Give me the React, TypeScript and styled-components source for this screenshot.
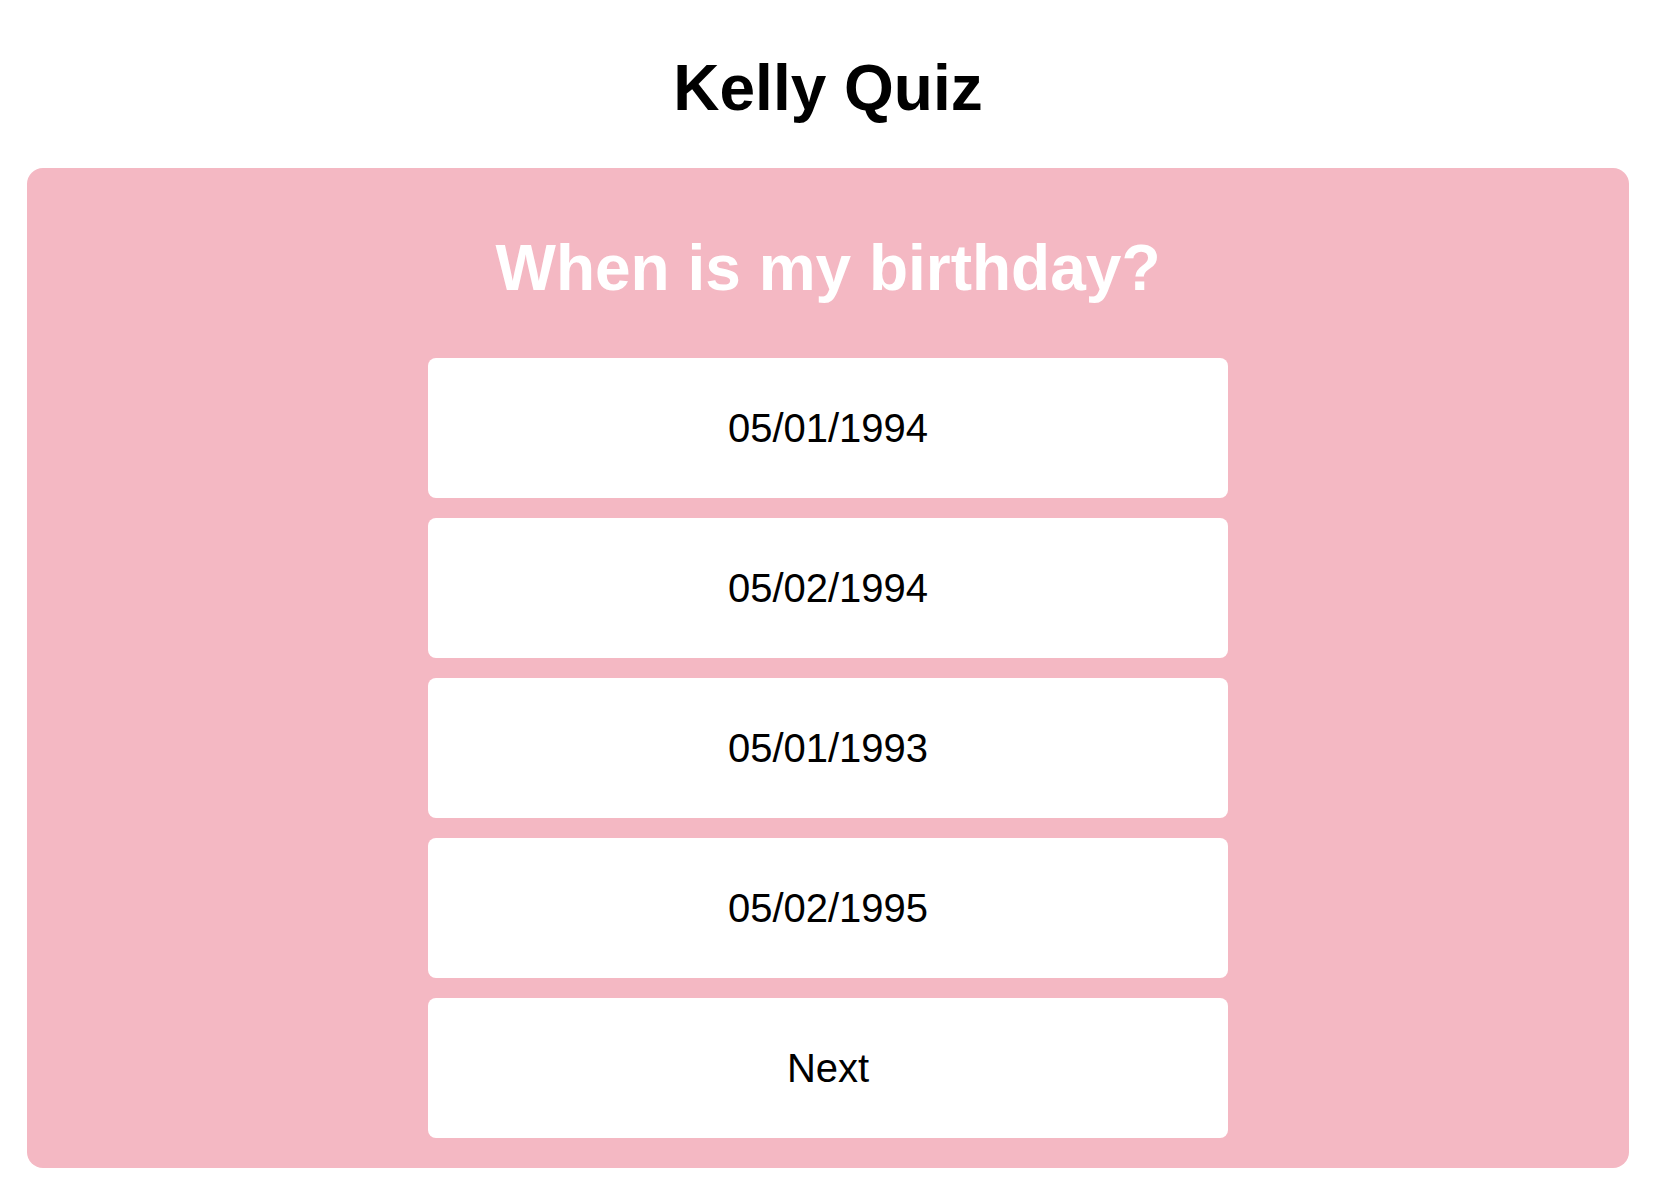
import React from 'react';
import styled, { createGlobalStyle } from 'styled-components';

const GlobalStyle = createGlobalStyle`
  body {
    margin: 8px;
    background: #ffffff;
    font-family: 'Liberation Sans', Arial, sans-serif;
  }
`;

const Title = styled.h1`
  margin: 43px 0;
  font-size: 64px;
  font-weight: 700;
  line-height: normal;
  text-align: center;
  color: #000;
`;

const Card = styled.div`
  margin: 0 19px;
  padding: 10px 10px 30px;
  background: #f4b8c3;
  border-radius: 16px;
  display: flex;
  flex-flow: column;
  align-items: center;
`;

const Question = styled.h2`
  margin: 53px 0;
  font-size: 64px;
  font-weight: 700;
  line-height: normal;
  color: #ffffff;
  text-align: center;
`;

const Options = styled.div`
  display: flex;
  flex-flow: column;
  gap: 20px;
  width: 800px;
`;

const OptionButton = styled.button`
  height: 140px;
  border: none;
  border-radius: 8px;
  background: #ffffff;
  color: #000;
  font-family: 'Liberation Sans', Arial, sans-serif;
  font-size: 40px;
  line-height: normal;
  cursor: pointer;
`;

const answers = ['05/01/1994', '05/02/1994', '05/01/1993', '05/02/1995'];

const App = () => {
  return (
    <>
      <GlobalStyle />
      <Title>Kelly Quiz</Title>
      <Card>
        <Question>When is my birthday?</Question>
        <Options>
          {answers.map((a) => (
            <OptionButton key={a}>{a}</OptionButton>
          ))}
          <OptionButton>Next</OptionButton>
        </Options>
      </Card>
    </>
  );
};

export default App;
